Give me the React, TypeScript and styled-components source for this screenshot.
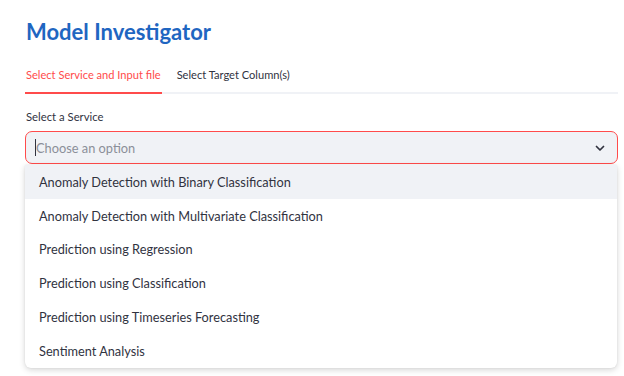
import React from "react";
import styled, { createGlobalStyle } from "styled-components";

const GlobalStyle = createGlobalStyle`
    html, body {
        margin: 0;
        padding: 0;
        background: #ffffff;
        font-family: Lato, "Noto Sans", sans-serif;
    }
`;

const Page = styled.div`
    width: 624px;
    height: 376px;
    overflow: hidden;
    box-sizing: border-box;
    padding: 17px 6px 0 25px;
`;

const Title = styled.h1`
    margin: 0 0 0 1px;
    font-size: 22px;
    font-weight: 700;
    line-height: 30px;
    color: #1f66c1;
`;

const TabBar = styled.div`
    display: flex;
    gap: 14px;
    margin-top: 20px;
    border-bottom: 2px solid #f0f2f6;
`;

const Tab = styled.div<{ active?: boolean }>`
    padding: 0 1px 9px 1px;
    font-size: 11.1px;
    line-height: 16px;
    color: ${({ active }) => (active ? "#ff4b4b" : "#31333f")};
    border-bottom: 2px solid ${({ active }) => (active ? "#ff4b4b" : "transparent")};
    margin-bottom: -2px;
`;

const Label = styled.div`
    margin: 15px 0 0 1px;
    font-size: 11.3px;
    line-height: 16px;
    color: #31333f;
`;

const SelectWrap = styled.div`
    margin-top: 6px;
`;

const SelectBox = styled.div`
    display: flex;
    align-items: center;
    height: 33px;
    box-sizing: border-box;
    padding: 0 11px 0 9px;
    background: #f0f2f6;
    border: 1px solid #ff4b4b;
    border-radius: 7px;
`;

const Caret = styled.span`
    width: 1px;
    height: 17px;
    background: #31333f;
`;

const Placeholder = styled.span`
    flex: 1;
    font-size: 12.8px;
    color: #8b8f99;
`;

const Menu = styled.ul`
    list-style: none;
    margin: 1px 1px 0 0;
    padding: 0;
    background: #ffffff;
    border-radius: 0 0 6px 6px;
    box-shadow: 0 2px 6px rgba(0, 0, 0, 0.16), 0 0 2px rgba(0, 0, 0, 0.08);
    overflow: hidden;
`;

const Option = styled.li<{ highlighted?: boolean }>`
    height: 33.8px;
    display: flex;
    align-items: center;
    padding-left: 14px;
    font-size: 12.75px;
    color: #31333f;
    background: ${({ highlighted }) => (highlighted ? "#f0f2f6" : "transparent")};
`;

const Chevron = () => (
    <svg width="12" height="12" viewBox="0 0 24 24" fill="none" stroke="#31333f" strokeWidth="3.5" strokeLinecap="round" strokeLinejoin="round">
        <path d="M5 9l7 7 7-7" />
    </svg>
);

const options = [
    "Anomaly Detection with Binary Classification",
    "Anomaly Detection with Multivariate Classification",
    "Prediction using Regression",
    "Prediction using Classification",
    "Prediction using Timeseries Forecasting",
    "Sentiment Analysis",
];

export default function App() {
    return (
        <Page>
            <GlobalStyle />
            <Title>Model Investigator</Title>
            <TabBar>
                <Tab active>Select Service and Input file</Tab>
                <Tab>Select Target Column(s)</Tab>
            </TabBar>
            <Label>Select a Service</Label>
            <SelectWrap>
                <SelectBox>
                    <Caret />
                    <Placeholder>Choose an option</Placeholder>
                    <Chevron />
                </SelectBox>
                <Menu>
                    {options.map((o, i) => (
                        <Option key={o} highlighted={i === 0}>
                            {o}
                        </Option>
                    ))}
                </Menu>
            </SelectWrap>
        </Page>
    );
}
